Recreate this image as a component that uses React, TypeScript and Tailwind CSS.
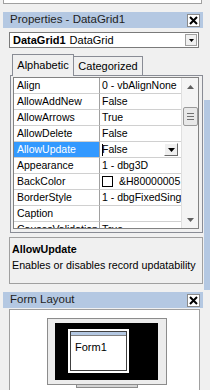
import React from "react";

const rows: [string, string][] = [
  ["Align", "0 - vbAlignNone"],
  ["AllowAddNew", "False"],
  ["AllowArrows", "True"],
  ["AllowDelete", "False"],
  ["AllowUpdate", "False"],
  ["Appearance", "1 - dbg3D"],
  ["BackColor", "&H80000005"],
  ["BorderStyle", "1 - dbgFixedSingle"],
  ["Caption", ""],
  ["CausesValidation", "True"],
];

function CloseBtn() {
  return (
    <div className="w-[13px] h-[13px] bg-white border border-[#8a8a8a] flex items-center justify-center">
      <svg width="9" height="9" viewBox="0 0 9 9">
        <path d="M1 1 L8 8 M8 1 L1 8" stroke="#000" strokeWidth="2" />
      </svg>
    </div>
  );
}

function TitleBar({ title }: { title: string }) {
  return (
    <div className="ml-[3px] w-[200px] h-[16px] bg-[#b4c8e2] flex items-center justify-between pl-[7px] pr-[3px]">
      <span className="text-[11.5px] leading-none text-[#1e1e1e]">{title}</span>
      <CloseBtn />
    </div>
  );
}

function Row({ name, value, idx }: { name: string; value: string; idx: number }) {
  const selected = name === "AllowUpdate";
  return (
    <div className="flex h-[16px] shrink-0">
      <div
        className={
          "w-[86px] shrink-0 pl-[3px] border-r border-r-[#a0a0a0] border-b border-b-[#d0d0d0] flex items-center whitespace-nowrap overflow-hidden " +
          (selected ? "bg-[#3399ff] text-white" : "bg-white text-black")
        }
      >
        {name}
      </div>
      <div className="flex-1 min-w-0 bg-white border-b border-b-[#d0d0d0] flex items-center whitespace-nowrap overflow-hidden relative">
        {selected ? (
          <>
            <span className="ml-[2px] w-px h-[12px] bg-black" />
            <span className="-ml-px">{value}</span>
            <div className="absolute right-[3px] top-[1px] w-[14px] h-[13px] bg-[#f0f0f0] border border-t-white border-l-white border-r-[#696969] border-b-[#696969] flex items-center justify-center">
              <svg width="7" height="4" viewBox="0 0 7 4">
                <path d="M0 0 L7 0 L3.5 4 Z" fill="#000" />
              </svg>
            </div>
          </>
        ) : name === "BackColor" ? (
          <>
            <span className="ml-[2px] w-[11px] h-[11px] border border-black bg-white shrink-0" />
            <span className="ml-[6px]">{value}</span>
          </>
        ) : (
          <span className="ml-[2px]">{value}</span>
        )}
      </div>
      {idx < 0 && null}
    </div>
  );
}

export default function App() {
  return (
    <div className="w-[210px] h-[390px] bg-[#f0f0f0] overflow-hidden flex font-['Liberation_Sans',Arial,sans-serif] text-black">
      <div className="w-[204px] shrink-0 flex flex-col">
        {/* bottom of panel above */}
        <div className="ml-[3px] w-[199px] h-[4px] bg-white border-x border-b border-[#a0a0a0] shrink-0" />
        <div className="h-[8px] shrink-0" />
        <TitleBar title="Properties - DataGrid1" />

        {/* object combo */}
        <div className="mt-[4px] ml-[9px] w-[190px] h-[16px] bg-white border border-[#7a7a7a] flex items-center text-[11px] leading-none shrink-0 relative">
          <span className="ml-[3px] font-bold">DataGrid1</span>
          <span className="ml-[4px]">DataGrid</span>
          <div className="absolute right-[1px] top-[1px] w-[12px] h-[12px] bg-[#f0f0f0] border border-[#a0a0a0] flex items-center justify-center">
            <svg width="5" height="3" viewBox="0 0 5 3">
              <path d="M0 0 L5 0 L2.5 3 Z" fill="#000" />
            </svg>
          </div>
        </div>

        {/* tabs */}
        <div className="mt-[6px] flex items-end h-[22px] shrink-0 relative z-10">
          <div className="ml-[12px] w-[62px] h-[22px] bg-[#f0f0f0] border-t border-x border-[#898c95] flex items-center justify-center text-[11px] leading-none">
            Alphabetic
          </div>
          <div className="w-[69px] h-[19px] bg-[#f0f0f0] border-t border-r border-[#898c95] flex items-center justify-center text-[11px] leading-none mb-px">
            Categorized
          </div>
        </div>

        {/* tab page */}
        <div className="-mt-px ml-[10px] w-[193px] h-[158px] border border-[#898c95] bg-[#f0f0f0] pl-[2px] pt-px shrink-0">
          <div className="w-[186px] h-[152px] border border-[#828282] flex text-[10.5px] leading-none overflow-hidden">
            <div className="w-[167px] flex flex-col overflow-hidden">
              {rows.map((r, i) => (
                <Row key={r[0]} name={r[0]} value={r[1]} idx={i} />
              ))}
            </div>
            <div className="w-[17px] bg-[#f4f4f4] border-l border-[#e0e0e0] flex flex-col items-center">
              <div className="h-[17px] flex items-center justify-center">
                <svg width="7" height="4" viewBox="0 0 7 4">
                  <path d="M0 4 L7 4 L3.5 0 Z" fill="#606060" />
                </svg>
              </div>
              <div className="mt-[12px] w-[15px] h-[19px] bg-[#e8e8e8] border border-[#9a9a9a] rounded-[2px] flex flex-col items-center justify-center gap-[2px]">
                <span className="w-[7px] h-px bg-[#707070]" />
                <span className="w-[7px] h-px bg-[#707070]" />
                <span className="w-[7px] h-px bg-[#707070]" />
              </div>
              <div className="flex-1" />
              <div className="h-[17px] flex items-center justify-center">
                <svg width="7" height="4" viewBox="0 0 7 4">
                  <path d="M0 0 L7 0 L3.5 4 Z" fill="#606060" />
                </svg>
              </div>
            </div>
          </div>
        </div>

        {/* description */}
        <div className="mt-[4px] ml-[9px] w-[194px] h-[47px] border border-[#a0a0a0] pl-[2px] pt-[3px] text-[10.7px] leading-[16px] shrink-0">
          <div className="font-bold">AllowUpdate</div>
          <div className="whitespace-nowrap">Enables or disables record updatability</div>
        </div>

        <div className="h-[8px] shrink-0" />
        <TitleBar title="Form Layout" />

        {/* form layout panel */}
        <div className="mt-px ml-[9px] w-[191px] flex-1 bg-white border-t border-x border-[#a0a0a0] pt-[8px] pl-[37px]">
          <div className="w-[120px] h-[67px] bg-[#ececec] border border-[#8c8c8c] pt-[4px] pl-[7px]">
            <div className="w-[103px] h-[57px] bg-black pt-[6px] pl-[13px]">
              <div className="w-[61px] h-[44px] bg-white p-[2px]">
                <div className="w-full h-full border border-[#404040] flex flex-col">
                  <div className="h-[4px] bg-[#b4c8e2] border-b border-[#808080]" />
                  <div className="flex-1 bg-white pl-[4px] pt-[6px] text-[11px] leading-none">Form1</div>
                </div>
              </div>
            </div>
          </div>
          <div className="ml-[29px] w-[62px] h-[3px] bg-[#d4d4d4] border-x border-b border-[#8c8c8c]" />
        </div>
      </div>
      <div className="flex-1 flex flex-col">
        <div className="h-[100px] bg-[#f0f0f0]" />
        <div className="h-[190px] bg-[#b4c8e2]" />
        <div className="flex-1 bg-[#f0f0f0]" />
      </div>
    </div>
  );
}
